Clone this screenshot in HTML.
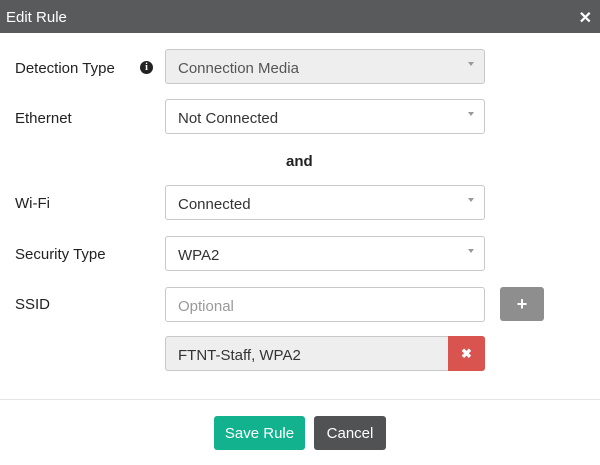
<!DOCTYPE html>
<html><head><style>
body{margin:0;width:600px;height:465px;background:#fff;font-family:"Liberation Sans",sans-serif;position:relative;overflow:hidden;color:#333}
.hd{position:absolute;left:0;top:0;width:600px;height:33px;background:#595a5c;color:#fff;font-size:15px;line-height:35px}
.hd span{position:absolute;left:6px}
.hd b{position:absolute;right:8px;top:1px;font-size:16px}
.lb{position:absolute;left:15px;font-size:15px;color:#222}
.f{position:absolute;left:165px;width:318px;height:33px;border:1px solid #c8c8c8;border-radius:3px;background:#fff;font-size:15px;line-height:37px;box-sizing:content-box}
.f span{position:absolute;left:12px}
.f i{position:absolute;right:10px;top:12px;width:0;height:0;border-left:3px solid transparent;border-right:3px solid transparent;border-top:4px solid #999}
.dis{background:#eee}
</style></head><body>
<div class="hd"><span>Edit Rule</span><b>✕</b></div>
<div class="lb" style="top:60px">Detection Type</div>
<div style="position:absolute;left:140px;top:61px;width:13px;height:13px;border-radius:50%;background:#222;color:#fff;font-size:10px;font-weight:bold;text-align:center;line-height:13px;font-family:'Liberation Serif',serif">i</div>
<div class="f dis" style="top:49px"><span style="color:#555">Connection Media</span><i></i></div>
<div class="lb" style="top:110px">Ethernet</div>
<div class="f" style="top:99px"><span>Not Connected</span><i></i></div>
<div style="position:absolute;left:286px;top:153px;font-size:15px;font-weight:bold;color:#222">and</div>
<div class="lb" style="top:195px">Wi-Fi</div>
<div class="f" style="top:185px"><span>Connected</span><i></i></div>
<div class="lb" style="top:246px">Security Type</div>
<div class="f" style="top:236px"><span>WPA2</span><i></i></div>
<div class="lb" style="top:296px">SSID</div>
<div class="f" style="top:287px"><span style="color:#999">Optional</span></div>
<div style="position:absolute;left:500px;top:287px;width:44px;height:34px;background:#8e8e8e;border-radius:3px;color:#fff;font-weight:bold;text-align:center;line-height:35px;font-size:18px">+</div>
<div class="f dis" style="top:336px"><span>FTNT-Staff, WPA2</span></div>
<div style="position:absolute;left:448px;top:336px;width:37px;height:35px;background:#d9534f;border-radius:0 3px 3px 0;color:#fff;text-align:center;line-height:36px;font-size:13px;font-weight:bold">✖</div>
<div style="position:absolute;left:0;top:399px;width:600px;height:1px;background:#e5e5e5"></div>
<div style="position:absolute;left:214px;top:416px;width:91px;height:34px;background:#13b28e;border-radius:3px;color:#fff;font-size:15px;text-align:center;line-height:36px">Save Rule</div>
<div style="position:absolute;left:314px;top:416px;width:72px;height:34px;background:#505254;border-radius:3px;color:#fff;font-size:15px;text-align:center;line-height:36px">Cancel</div>
</body></html>
